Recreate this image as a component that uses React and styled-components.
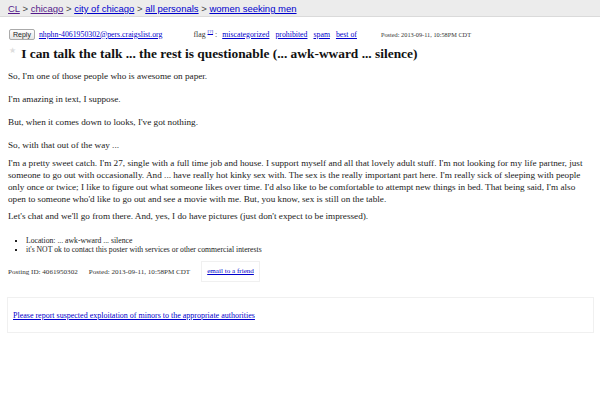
import React from 'react';
import styled, { createGlobalStyle } from 'styled-components';

const GlobalStyle = createGlobalStyle`
	html, body {
		margin: 0;
		padding: 0;
		background: #fff;
	}
	body {
		font-family: 'Liberation Serif', 'Times New Roman', serif;
		color: #222;
	}
	a {
		color: #0000cc;
	}
`;

const Crumbs = styled.nav`
	height: 16px;
	padding: 0 8px;
	background: #ececec;
	border-bottom: 1px solid #dadada;
	font-family: 'Liberation Sans', Arial, sans-serif;
	font-size: 9.5px;
	line-height: 17px;
	color: #444;
	white-space: nowrap;
`;
const Crumb = styled.a`
	color: ${(props) => (props.visited ? '#551a8b' : '#0000cc')};
`;
const Page = styled.main`
	padding: 0 6px 0 8px;
`;
const Tools = styled.div`
	display: flex;
	align-items: center;
	margin-top: 11px;
	height: 12px;
	white-space: nowrap;
`;
const ReplyButton = styled.button`
	font-family: 'Liberation Sans', Arial, sans-serif;
	font-size: 7px;
	color: #222;
	height: 11px;
	padding: 0 3px;
	margin: 0 4px 0 1px;
	border: 1px solid #aaa;
	border-radius: 2px;
	background: linear-gradient(#fff, #e6e6e6);
	line-height: 9px;
`;
const SmallLink = styled.a`
	font-size: 7.8px;
	margin-right: ${(props) => props.gap || 0}px;
`;
const Flag = styled.span`
	margin-left: 31px;
	margin-right: 5px;
	font-size: 7.8px;
	color: #333;
	sup {
		font-size: 5px;
		color: #0000cc;
		text-decoration: underline;
	}
`;
const Stamp = styled.span`
	margin-left: 24px;
	font-size: 6.3px;
	color: #333;
`;
const Title = styled.h2`
	display: flex;
	align-items: center;
	margin: 5px 0 0 1px;
	font-size: 13.4px;
	font-weight: bold;
	line-height: 17px;
	color: #111;
`;
const Star = styled.span`
	font-family: 'DejaVu Sans', sans-serif;
	font-size: 8px;
	color: #ddd;
	margin-right: 5px;
	position: relative;
	top: -3px;
`;
const Body = styled.section`
	margin-top: 9px;
	font-size: 9.2px;
`;
const Para = styled.p`
	margin: 0 0 ${(props) => props.after ?? 12}px;
	line-height: ${(props) => (props.long ? 12 : 11)}px;
`;
const Notices = styled.ul`
	margin: 14px 0 0;
	padding-left: 18px;
	font-size: 7.7px;
	line-height: 9px;
	list-style: square;
`;
const PostInfo = styled.div`
	display: flex;
	align-items: center;
	margin-top: 7px;
	font-size: 7.1px;
	color: #333;
	white-space: nowrap;
`;
const InfoItem = styled.span`
	margin-right: 11px;
`;
const FriendBox = styled.div`
	padding: 5px 5px 6px;
	border: 1px solid #f0f0f0;
	a {
		font-size: 7.1px;
	}
`;
const ReportBox = styled.div`
	margin: 15px 0 0 -1px;
	height: 34px;
	display: flex;
	align-items: center;
	padding-left: 5px;
	border: 1px solid #f0f0f0;
	a {
		font-size: 8px;
	}
`;

function App() {
	return (
		<>
			<GlobalStyle />
			<Crumbs>
				<Crumb visited href='#'>CL</Crumb> &gt; <Crumb visited href='#'>chicago</Crumb> &gt;{' '}
				<Crumb href='#'>city of chicago</Crumb> &gt; <Crumb href='#'>all personals</Crumb> &gt;{' '}
				<Crumb href='#'>women seeking men</Crumb>
			</Crumbs>
			<Page>
				<Tools>
					<ReplyButton>Reply</ReplyButton>
					<SmallLink href='#'>nhphn-4061950302@pers.craigslist.org</SmallLink>
					<Flag>
						flag <sup>[?]</sup> :
					</Flag>
					<SmallLink href='#' gap={6}>miscategorized</SmallLink>
					<SmallLink href='#' gap={6}>prohibited</SmallLink>
					<SmallLink href='#' gap={6}>spam</SmallLink>
					<SmallLink href='#'>best of</SmallLink>
					<Stamp>Posted: 2013-09-11, 10:58PM CDT</Stamp>
				</Tools>
				<Title>
					<Star>★</Star>I can talk the talk ... the rest is questionable (... awk-wward ... silence)
				</Title>
				<Body>
					<Para>So, I'm one of those people who is awesome on paper.</Para>
					<Para>I'm amazing in text, I suppose.</Para>
					<Para>But, when it comes down to looks, I've got nothing.</Para>
					<Para after={6}>So, with that out of the way ...</Para>
					<Para long after={6}>
						I'm a pretty sweet catch. I'm 27, single with a full time job and house. I support myself and all that
						lovely adult stuff. I'm not looking for my life partner, just someone to go out with occasionally. And
						... have really hot kinky sex with. The sex is the really important part here. I'm really sick of
						sleeping with people only once or twice; I like to figure out what someone likes over time. I'd also
						like to be comfortable to attempt new things in bed. That being said, I'm also open to someone who'd
						like to go out and see a movie with me. But, you know, sex is still on the table.
					</Para>
					<Para after={0}>
						Let's chat and we'll go from there. And, yes, I do have pictures (just don't expect to be impressed).
					</Para>
				</Body>
				<Notices>
					<li>Location: ... awk-wward ... silence</li>
					<li>it's NOT ok to contact this poster with services or other commercial interests</li>
				</Notices>
				<PostInfo>
					<InfoItem>Posting ID: 4061950302</InfoItem>
					<InfoItem>Posted: 2013-09-11, 10:58PM CDT</InfoItem>
					<FriendBox>
						<a href='#'>email to a friend</a>
					</FriendBox>
				</PostInfo>
				<ReportBox>
					<a href='#'>Please report suspected exploitation of minors to the appropriate authorities</a>
				</ReportBox>
			</Page>
		</>
	);
}

export default App;
